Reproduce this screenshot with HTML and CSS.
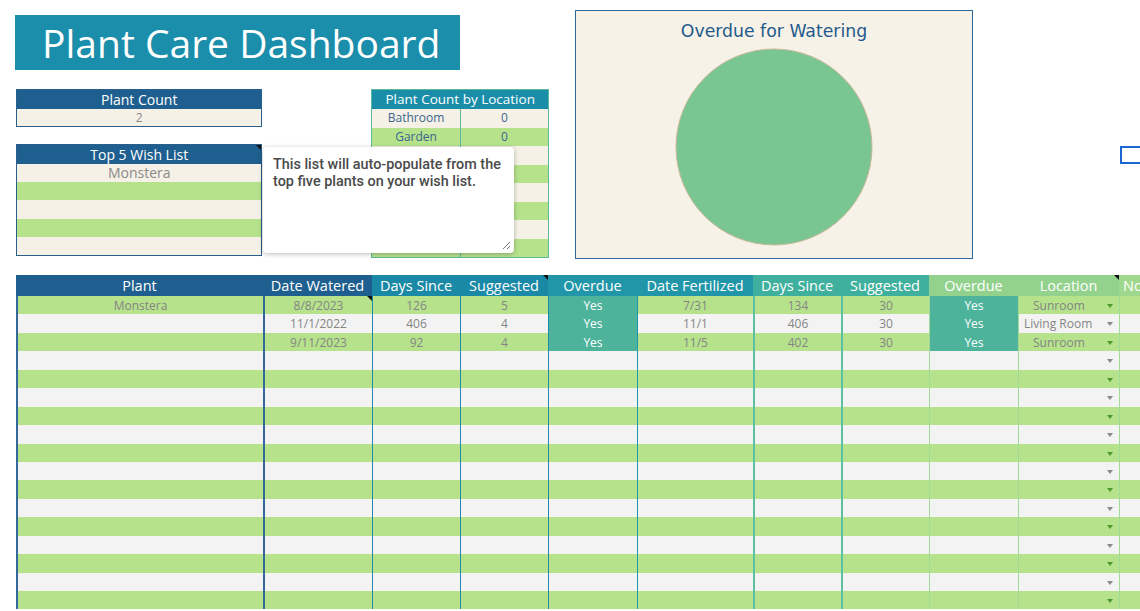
FILE: index.html
```html
<!DOCTYPE html>
<html>

<head>
    <meta charset='utf-8'>
    <title>Plant Care Dashboard</title>
    <meta name='viewport' content='width=device-width, initial-scale=1'>
    <link rel="stylesheet" href="styles.css">
</head>

<body>
    <div class="top">
        <div class="left">
            <h1 class="title">Plant Care Dashboard</h1>
            <div class="widgets">
                <div class="stack">
                    <table class="mini count">
                        <tr><th>Plant Count</th></tr>
                        <tr><td>2</td></tr>
                    </table>
                    <table class="mini wish">
                        <tr><th class="note">Top 5 Wish List</th></tr>
                        <tr><td>Monstera</td></tr>
                        <tr><td></td></tr>
                        <tr><td></td></tr>
                        <tr><td></td></tr>
                        <tr><td></td></tr>
                    </table>
                </div>
                <table class="mini location">
                    <tr><th colspan="2">Plant Count by Location</th></tr>
                    <tr><td>Bathroom</td><td>0</td></tr>
                    <tr><td>Garden</td><td>0</td></tr>
                    <tr><td></td><td></td></tr>
                    <tr><td></td><td></td></tr>
                    <tr><td></td><td></td></tr>
                    <tr><td></td><td></td></tr>
                    <tr><td></td><td></td></tr>
                    <tr><td></td><td></td></tr>
                </table>
                <!-- comment popup on the wish list header -->
                <div class="popup">
                    This list will auto-populate from the top five plants on your wish list.
                    <svg class="grip" width="9" height="9" viewBox="0 0 9 9">
                        <path d="M1 8 L8 1 M5 8 L8 5" stroke="#777" stroke-width="1" />
                    </svg>
                </div>
            </div>
        </div>

        <div class="chart">
            <div class="chart-title">Overdue for Watering</div>
            <svg class="pie" width="396" height="222" viewBox="0 0 396 222">
                <circle cx="198" cy="112" r="98" fill="#79c692" stroke="#c9b79a" stroke-width="1" />
            </svg>
        </div>

        <div class="sel-box"></div>
    </div>

    <table class="log">
        <colgroup>
            <col style="width: 247px">
            <col style="width: 109px">
            <col style="width: 88px">
            <col style="width: 88px">
            <col style="width: 89px">
            <col style="width: 116px">
            <col style="width: 88px">
            <col style="width: 88px">
            <col style="width: 89px">
            <col style="width: 101px">
            <col style="width: 120px">
        </colgroup>
        <thead>
            <tr>
                <th class="h-blue">Plant</th>
                <th class="h-blue">Date Watered</th>
                <th class="h-teal">Days Since</th>
                <th class="h-teal note">Suggested</th>
                <th class="h-teal2">Overdue</th>
                <th class="h-teal2">Date Fertilized</th>
                <th class="h-sea">Days Since</th>
                <th class="h-sea">Suggested</th>
                <th class="h-lime">Overdue</th>
                <th class="h-lime note">Location</th>
                <th class="h-pale">Notes</th>
            </tr>
        </thead>
        <tbody id="rows">
            <tr>
                <td>Monstera</td><td class="note">8/8/2023</td><td>126</td><td>5</td>
                <td class="due">Yes</td><td>7/31</td><td>134</td><td>30</td>
                <td class="due">Yes</td><td class="loc">Sunroom</td><td></td>
            </tr>
            <tr>
                <td></td><td>11/1/2022</td><td>406</td><td>4</td>
                <td class="due">Yes</td><td>11/1</td><td>406</td><td>30</td>
                <td class="due">Yes</td><td class="loc">Living Room</td><td></td>
            </tr>
            <tr>
                <td></td><td>9/11/2023</td><td>92</td><td>4</td>
                <td class="due">Yes</td><td>11/5</td><td>402</td><td>30</td>
                <td class="due">Yes</td><td class="loc">Sunroom</td><td></td>
            </tr>
        </tbody>
    </table>

    <script>
        // pad the log out with empty rows
        const body = document.querySelector("#rows")
        for (let i = 0; i < 14; i++) {
            let tr = document.createElement("tr")
            for (let c = 0; c < 11; c++) {
                let td = document.createElement("td")
                if (c == 9) td.className = "loc"
                tr.appendChild(td)
            }
            body.appendChild(tr)
        }
    </script>
</body>

</html>
```

FILE: styles.css
```css
html,
body {
    margin: 0;
    padding: 0;
    width: 1140px;
    height: 611px;
    overflow: hidden;
    background: #fff;
    font-family: "Open Sans", "Liberation Sans", sans-serif;
}

.top {
    display: flex;
    align-items: flex-start;
    height: 275px;
    padding-left: 15px;
}

.left {
    width: 534px;
    padding-top: 15px;
}

.title {
    margin: 0;
    width: 445px;
    height: 55px;
    box-sizing: border-box;
    padding-left: 27px;
    background: #1a8eab;
    color: #fff;
    font-size: 39px;
    font-weight: 400;
    line-height: 56px;
    white-space: nowrap;
}

.widgets {
    position: relative;
    display: flex;
    align-items: flex-start;
    margin-top: 19px;
    padding-left: 1px;
}

.stack {
    width: 247px;
}

/* small summary tables */
.mini {
    border-collapse: collapse;
    width: 100%;
    table-layout: fixed;
    font-size: 13px;
}

.mini th {
    height: 19px;
    padding: 0;
    color: #fff;
    font-weight: 400;
    font-size: 14px;
    line-height: 19px;
}

.mini td {
    height: 18.5px;
    padding: 0;
    text-align: center;
    color: #8a8a8a;
    line-height: 18px;
}

.count {
    border: 1px solid #2b5f8b;
}

.count th,
.wish th {
    background: #1f5f8f;
}

.count td {
    height: 17px;
    line-height: 17px;
    background: #f6f1e6;
    font-size: 12px;
}

.wish {
    margin-top: 17px;
    border: 1px solid #2b5f8b;
}

.wish td {
    height: 18.2px;
    font-size: 14px;
}

.wish tr:nth-child(even) td,
.location tr:nth-child(even) td {
    background: #f6f1e6;
}

.wish tr:nth-child(odd) td,
.location tr:nth-child(odd) td {
    background: #b6e28c;
}

.location {
    width: 178px;
    margin-left: 109px;
    border: 1px solid #5dba98;
}

.location th {
    background: #1a8ea9;
    font-size: 13.5px;
    white-space: nowrap;
}

.location td {
    color: #3a668f;
    font-size: 12px;
    border-left: 1px solid #5dba98;
}

.popup {
    position: absolute;
    left: 248px;
    top: 58px;
    width: 251px;
    height: 106px;
    box-sizing: border-box;
    padding: 9px 10px;
    background: #fff;
    border-radius: 4px;
    box-shadow: 0 1px 5px rgba(0, 0, 0, 0.28);
    font-family: Roboto, "Liberation Sans", sans-serif;
    font-weight: 500;
    font-size: 14.4px;
    line-height: 17px;
    color: #4a4a4a;
}

.grip {
    position: absolute;
    right: 3px;
    bottom: 3px;
}

.chart {
    width: 398px;
    height: 249px;
    margin-left: 26px;
    margin-top: 10px;
    box-sizing: border-box;
    border: 1px solid #2f6a9c;
    background: #f7f2e7;
}

.chart-title {
    margin-top: 10px;
    text-align: center;
    color: #1f5b8c;
    font-family: "DejaVu Sans", Verdana, sans-serif;
    font-size: 17.3px;
    line-height: 20px;
}

.pie {
    display: block;
    margin-top: -6px;
}

.sel-box {
    flex: none;
    width: 30px;
    height: 14px;
    margin-left: 147px;
    margin-top: 146px;
    border: 2px solid #1c66d4;
}

/* watering / fertilizing log */
.log {
    margin-left: 16px;
    width: 1211px;
    table-layout: fixed;
    border-collapse: separate;
    border-spacing: 0;
    font-size: 12px;
}

.log th {
    height: 21px;
    padding: 0;
    color: #fff;
    font-weight: 400;
    font-size: 14.5px;
    white-space: nowrap;
    overflow: hidden;
}

.h-blue { background: #1f5f8f; }
.h-teal { background: #1a89a6; }
.h-teal2 { background: #2096a8; }
.h-sea { background: #3fb09d; }
.h-lime { background: #93d28c; }
.h-pale { background: #9fd78c; text-align: left; padding-left: 4px !important; }

.log td {
    height: 18.45px;
    padding: 0;
    text-align: center;
    color: #858585;
    border-left: 1px solid #2b8fa8;
    white-space: nowrap;
    position: relative;
}

.log tbody tr:nth-child(odd) td {
    background: #b6e28c;
}

.log tbody tr:nth-child(even) td {
    background: #f3f3f3;
}

.log td:nth-child(1) { border-left: 2px solid #34689a; }
.log td:nth-child(2) { border-left: 2px solid #34689a; }
.log td:nth-child(3),
.log td:nth-child(4),
.log td:nth-child(5) { border-left-color: #1f8aab; }
.log td:nth-child(6) { border-left-color: #1f96b0; }
.log td:nth-child(7),
.log td:nth-child(8) { border-left: 2px solid #5cc1a0; }
.log td:nth-child(9),
.log td:nth-child(10),
.log td:nth-child(11) { border-left-color: #a3d996; }

.log tbody tr td.due {
    background: #4db39b;
    color: #fff;
}

.log td.loc {
    text-align: left;
    padding-left: 14px;
}

.log tbody tr:nth-child(2) td.loc {
    padding-left: 5px;
}

/* dropdown chip arrow */
.loc::after {
    content: "";
    position: absolute;
    right: 6px;
    top: 8px;
    border-left: 3.5px solid transparent;
    border-right: 3.5px solid transparent;
    border-top: 4px solid #8a8a8a;
}

.log tbody tr:nth-child(odd) .loc::after {
    border-top-color: #4f9a2c;
}

/* comment marker in the top right corner */
.note {
    position: relative;
}

.note::after {
    content: "";
    position: absolute;
    top: 0;
    right: 0;
    border-top: 5px solid #111;
    border-left: 5px solid transparent;
}
```
